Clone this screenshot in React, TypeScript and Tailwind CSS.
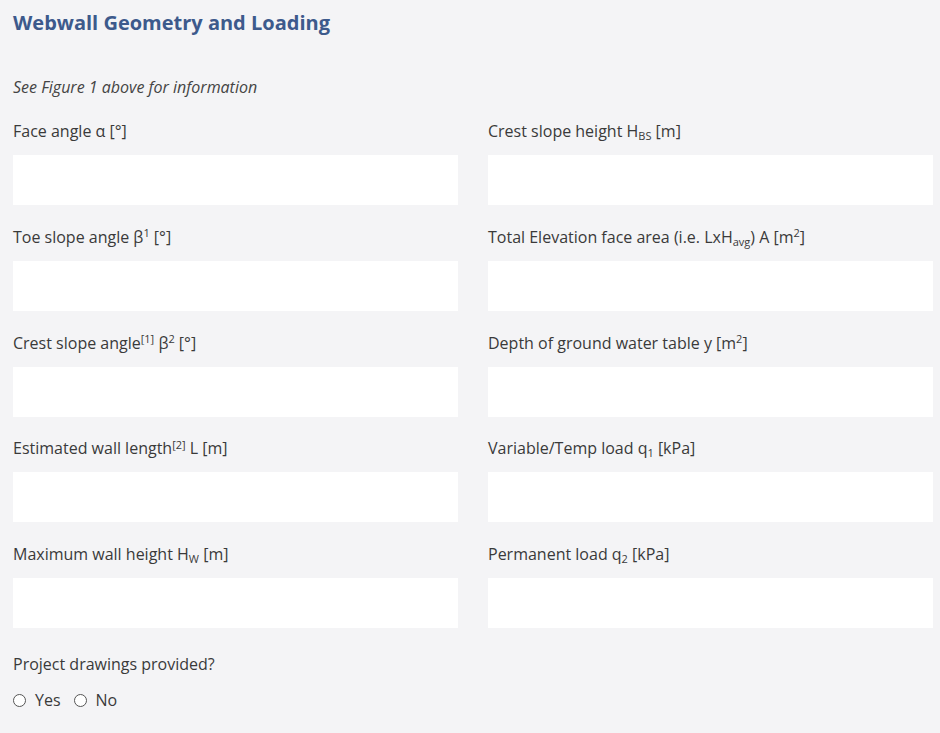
import React from 'react';

type Field = { id: string; label: React.ReactNode };

const Sup = ({ children }: { children: React.ReactNode }) => (
  <sup className="text-[11px]">{children}</sup>
);
const Sub = ({ children }: { children: React.ReactNode }) => (
  <sub className="text-[11px]">{children}</sub>
);

const LEFT: Field[] = [
  { id: 'alpha', label: <>Face angle α [°]</> },
  { id: 'beta1', label: <>Toe slope angle β<Sup>1</Sup> [°]</> },
  { id: 'beta2', label: <>Crest slope angle<Sup>[1]</Sup> β<Sup>2</Sup> [°]</> },
  { id: 'length', label: <>Estimated wall length<Sup>[2]</Sup> L [m]</> },
  { id: 'hw', label: <>Maximum wall height H<Sub>W</Sub> [m]</> },
];

const RIGHT: Field[] = [
  { id: 'hbs', label: <>Crest slope height H<Sub>BS</Sub> [m]</> },
  { id: 'area', label: <>Total Elevation face area (i.e. LxH<Sub>avg</Sub>) A [m<Sup>2</Sup>]</> },
  { id: 'y', label: <>Depth of ground water table y [m<Sup>2</Sup>]</> },
  { id: 'q1', label: <>Variable/Temp load q<Sub>1</Sub> [kPa]</> },
  { id: 'q2', label: <>Permanent load q<Sub>2</Sub> [kPa]</> },
];

const FieldRow = ({ field }: { field: Field }) => (
  <div className="flex flex-col">
    <label htmlFor={field.id} className="text-[16px] leading-[22px] text-[#3a3a3a]">
      {field.label}
    </label>
    <input id={field.id} type="text" className="mt-[13px] h-[50px] w-full bg-white outline-none px-3" />
  </div>
);

export default function App() {
  return (
    <div
      className="min-h-[733px] bg-[#f4f4f6] pl-[13px] pr-[7px] pt-[9px] text-[#3a3a3a]"
      style={{ fontFamily: '"Open Sans", "Noto Sans", sans-serif' }}
    >
      <h2 className="text-[20px] leading-[28px] font-bold text-[#3d5a8c]">Webwall Geometry and Loading</h2>
      <p className="mt-[39px] text-[16px] leading-[22px] italic text-[#444]">See Figure 1 above for information</p>

      <div className="mt-[22px] grid grid-cols-2 gap-x-[30px] gap-y-[20.75px]">
        {LEFT.map((f, i) => (
          <React.Fragment key={f.id}>
            <FieldRow field={f} />
            <FieldRow field={RIGHT[i]} />
          </React.Fragment>
        ))}
      </div>

      <p className="mt-[25px] text-[16px] leading-[22px]">Project drawings provided?</p>
      <div className="mt-[14px] flex items-center gap-[13px] text-[16px] leading-[22px]">
        <label className="flex items-center gap-[9px]">
          <span className="inline-block h-[13px] w-[13px] rounded-full border border-[#555] bg-white" />
          Yes
        </label>
        <label className="flex items-center gap-[9px]">
          <span className="inline-block h-[13px] w-[13px] rounded-full border border-[#555] bg-white" />
          No
        </label>
      </div>
    </div>
  );
}
